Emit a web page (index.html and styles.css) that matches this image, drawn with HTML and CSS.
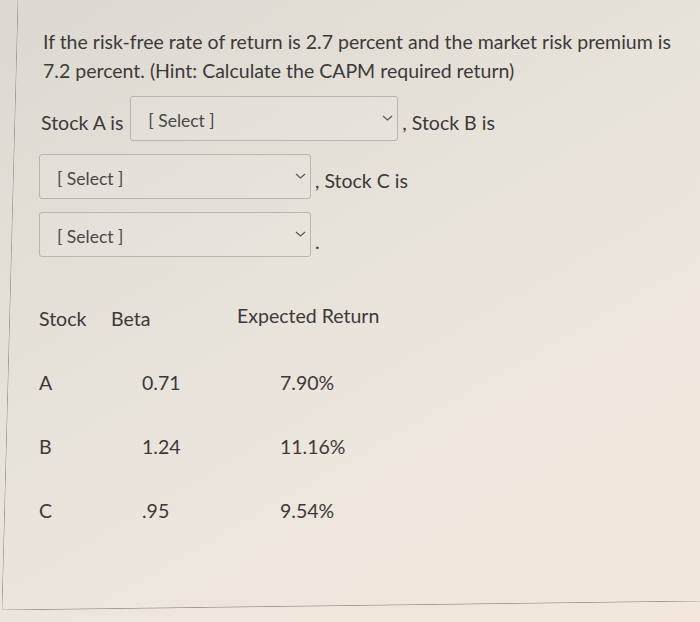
FILE: index.html
```html
<!DOCTYPE html>
<html>
<head>
<meta charset="utf-8">
<link rel="stylesheet" href="styles.css">
</head>
<body>
<div class="card">
  <p class="question">If the risk-free rate of return is 2.7 percent and the market risk premium is 7.2 percent. (Hint: Calculate the CAPM required return)</p>
  <div class="line line-a">
    <span class="label">Stock A is</span>
    <div class="select select-wide"><span class="placeholder">[ Select ]</span><svg class="chev" viewBox="0 0 11 6" width="11" height="6"><path d="M1 1 L5.5 5 L10 1" fill="none" stroke="#5a5855" stroke-width="1.2"/></svg></div>
    <span class="after">, Stock B is</span>
  </div>
  <div class="line">
    <div class="select"><span class="placeholder">[ Select ]</span><svg class="chev" viewBox="0 0 11 6" width="11" height="6"><path d="M1 1 L5.5 5 L10 1" fill="none" stroke="#5a5855" stroke-width="1.2"/></svg></div>
    <span class="after">, Stock C is</span>
  </div>
  <div class="line">
    <div class="select"><span class="placeholder">[ Select ]</span><svg class="chev" viewBox="0 0 11 6" width="11" height="6"><path d="M1 1 L5.5 5 L10 1" fill="none" stroke="#5a5855" stroke-width="1.2"/></svg></div>
    <span class="after dot">.</span>
  </div>
  <div class="table">
    <div class="th">Stock</div><div class="th">Beta</div><div class="th th-ret">Expected Return</div>
    <div class="td">A</div><div class="td td-beta">0.71</div><div class="td td-ret">7.90%</div>
    <div class="td">B</div><div class="td td-beta">1.24</div><div class="td td-ret">11.16%</div>
    <div class="td">C</div><div class="td td-beta">.95</div><div class="td td-ret">9.54%</div>
  </div>
</div>
</body>
</html>
```
FILE: styles.css
```css
html, body {
  margin: 0;
  padding: 0;
}
body {
  width: 700px;
  height: 622px;
  overflow: hidden;
  background-color: #e8e3db;
  background-image:
    linear-gradient(to bottom right, transparent calc(50% - 0.7px), #a29d96 50%, transparent calc(50% + 0.7px)),
    linear-gradient(to bottom right, transparent calc(50% - 0.8px), #a09a92 50%, transparent calc(50% + 0.8px)),
    linear-gradient(150deg, #dcd9d2 0%, #e5e1d9 35%, #ede6dd 65%, #f3e7db 100%);
  background-position: 2px 0, 2px 601px, 0 0;
  background-size: 16px 609px, 698px 9px, 100% 100%;
  background-repeat: no-repeat;
  font-family: Lato, "Noto Sans", sans-serif;
  color: #3b3a38;
}
.card {
  padding: 27px 0 0 41px;
}
.question {
  margin: 0 0 0 2px;
  width: 640px;
  font-size: 19.5px;
  line-height: 29px;
}
.line {
  display: flex;
  align-items: center;
  margin-top: 13px;
  font-size: 19.5px;
  margin-left: -2px;
}
.line-a {
  margin-top: 11px;
  margin-left: 0;
}
.label {
  margin-right: 7px;
  margin-top: 8px;
}
.select {
  width: 272px;
  height: 45px;
  box-sizing: border-box;
  border: 1px solid #bab5ad;
  border-radius: 3px;
  background: rgba(255, 255, 255, 0.08);
  display: flex;
  align-items: center;
  justify-content: space-between;
  padding: 0 4px 0 17px;
  font-size: 17.5px;
  color: #4a4845;
}
.select-wide {
  width: 268px;
}
.placeholder {
  margin-top: 3px;
}
.chev {
  margin-top: -2px;
}
.after {
  margin-left: 4px;
  margin-top: 7px;
}
.dot {
  margin-top: 14px;
}
.table {
  display: grid;
  grid-template-columns: 72px 126px auto;
  grid-auto-rows: 64px;
  margin-top: 50px;
  margin-left: -2px;
  font-size: 19.5px;
  width: 400px;
}
.th-ret {
  margin-top: -3px;
}
.td-beta {
  padding-left: 31px;
}
.td-ret {
  padding-left: 43px;
}
```
